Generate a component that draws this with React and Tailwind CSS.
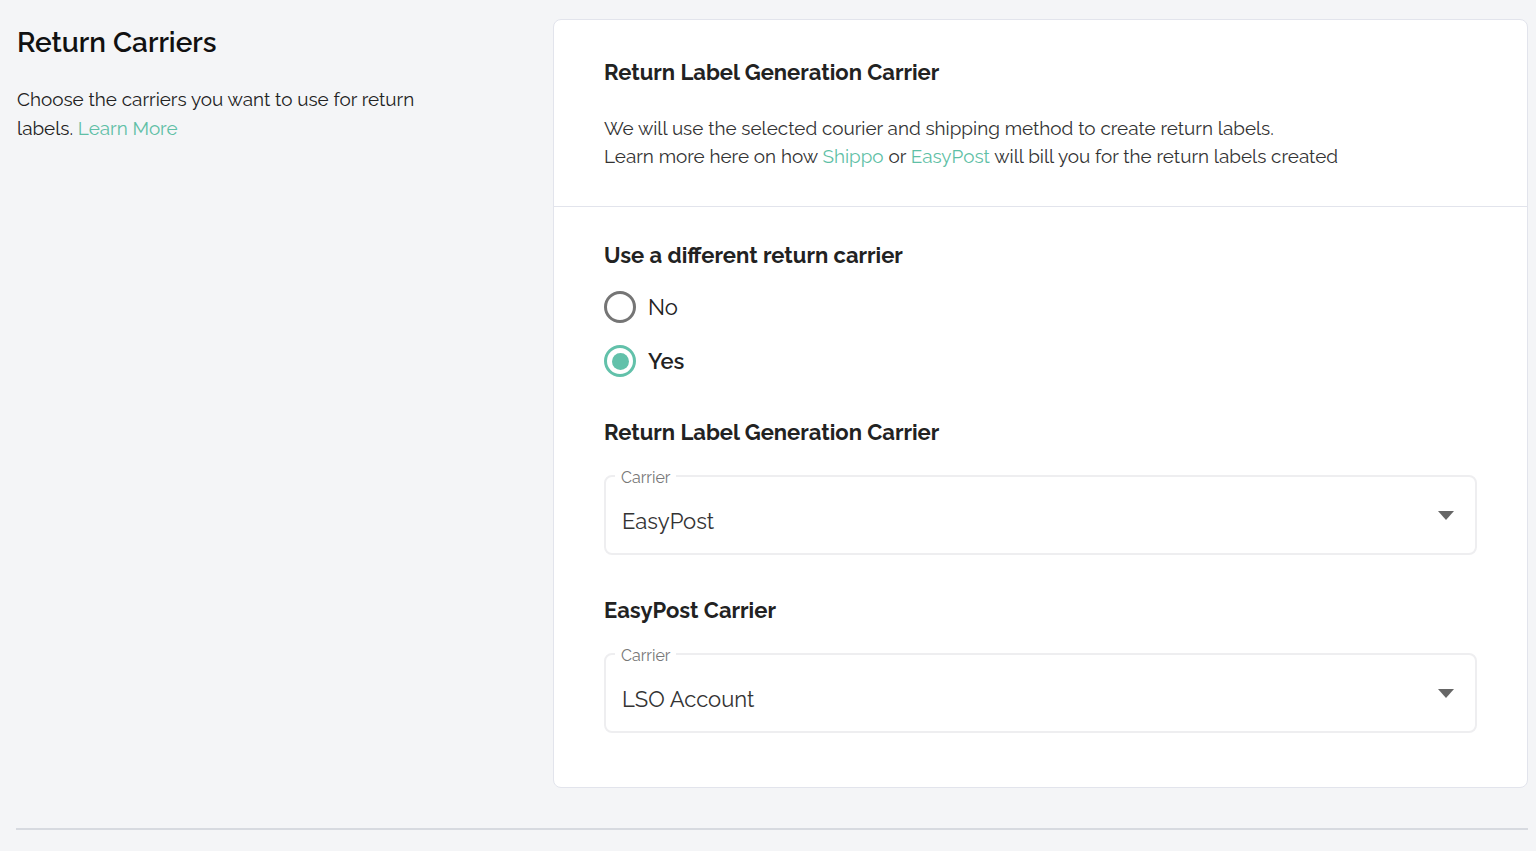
import React, { useState } from "react";

const teal = "text-[#5fbfa6]";

const Radio = ({ checked, label, onClick }) => (
  <button className="flex items-center gap-3 h-[32px]" onClick={onClick}>
    <span
      className={`w-[32px] h-[32px] rounded-full border-[3px] flex items-center justify-center ${
        checked ? "border-[#62c1aa]" : "border-[#757575]"
      }`}>
      {checked && <span className="w-[17px] h-[17px] rounded-full bg-[#62c1aa]" />}
    </span>
    <span className={`text-[22px] text-[#222] ${checked ? "font-semibold" : ""}`}>{label}</span>
  </button>
);

const SelectBox = ({ label, value }) => (
  <div className="relative h-[80px] rounded-lg border-2 border-[#eeeef0] flex items-center px-4 pt-[12px]">
    <span className="absolute -top-[9px] left-[9px] bg-white px-[6px] text-[16px] text-[#777] leading-[20px]">
      {label}
    </span>
    <span className="text-[22px] text-[#333] flex-1">{value}</span>
    {/* flecha */}
    <svg width="16" height="9" viewBox="0 0 16 9" className="mr-[5px] -mt-[12px]">
      <path d="M0 0h16L8 9z" fill="#666" />
    </svg>
  </div>
);

export default function App() {
  const [different, setDifferent] = useState(true);

  return (
    <div className="min-h-[851px] bg-[#f4f5f7] font-['Raleway','Lato',sans-serif] text-[#222] pt-[19px] pr-[8px]">
      <div className="flex">
        {/* Columna izquierda */}
        <div className="w-[553px] pl-[17px] pr-8 shrink-0">
          <h1 className="text-[28px] font-semibold text-[#111] leading-[36px] mt-[6px]">Return Carriers</h1>
          <p className="text-[18.9px] leading-[29px] text-[#222] mt-[24px] w-[420px]">
            Choose the carriers you want to use for return labels. <a className={teal}>Learn More</a>
          </p>
        </div>

        {/* Tarjeta */}
        <div className="flex-1 bg-white border border-[#e2e4ec] rounded-lg">
          <div className="px-[50px] pt-[38px] pb-[36px] border-b border-[#e2e4ec]">
            <h2 className="text-[22px] font-bold leading-[28px] text-[#222]">Return Label Generation Carrier</h2>
            <p className="text-[18.9px] leading-[28px] text-[#333] mt-[28px]">
              We will use the selected courier and shipping method to create return labels.
              <br />
              Learn more here on how <a className={teal}>Shippo</a> or{" "}
              <a className={teal}>EasyPost</a> will bill you for the return labels created
            </p>
          </div>

          <div className="pl-[50px] pr-[50px] pt-[34px] pb-[54px]">
            <h2 className="text-[22px] font-bold leading-[28px]">Use a different return carrier</h2>
            <div className="flex flex-col gap-[22px] mt-[22px]">
              <Radio label="No" checked={!different} onClick={() => setDifferent(false)} />
              <Radio label="Yes" checked={different} onClick={() => setDifferent(true)} />
            </div>

            <h2 className="text-[22px] font-bold leading-[28px] mt-[41px]">Return Label Generation Carrier</h2>
            <div className="mt-[29px]">
              <SelectBox label="Carrier" value="EasyPost" />
            </div>

            <h2 className="text-[22px] font-bold leading-[28px] mt-[41px]">EasyPost Carrier</h2>
            <div className="mt-[29px]">
              <SelectBox label="Carrier" value="LSO Account" />
            </div>
          </div>
        </div>
      </div>

      <div className="ml-[16px] mt-[40px] h-[2px] bg-[#d7dae0]" />
    </div>
  );
}
